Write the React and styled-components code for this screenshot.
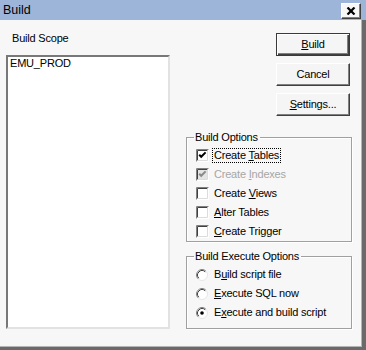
import React from 'react';
import styled, { createGlobalStyle } from 'styled-components';

const GlobalStyle = createGlobalStyle`
  html, body {
    margin: 0;
    padding: 0;
    background: #f7f7f7;
  }
  body {
    font-family: "Liberation Sans", Arial, sans-serif;
    font-size: 11px;
    letter-spacing: -0.2px;
    color: #000;
  }
`;

const Window = styled.div`
  width: 366px;
  height: 350px;
  display: flex;
  flex-direction: column;
  background: #f7f7f7;
  overflow: hidden;
`;

const TitleBar = styled.div`
  height: 20px;
  flex: none;
  display: flex;
  align-items: center;
  justify-content: space-between;
  padding: 0 5px 0 3px;
  background: #9db5d9;
`;

const Title = styled.span`
  font-size: 12.5px;
  letter-spacing: 0;
  line-height: 20px;
  color: #000;
`;

const CloseButton = styled.div`
  width: 20px;
  height: 16px;
  box-sizing: border-box;
  display: flex;
  align-items: center;
  justify-content: center;
  background: #f7f7f7;
  border: 1px solid;
  border-color: #fff #404040 #404040 #fff;
  box-shadow: inset -1px -1px #808080;
  margin-top: 1px;
`;

const Body = styled.div`
  flex: 1;
  display: flex;
  gap: 16px;
  padding: 0 10px 0 6px;
  border-right: 4px solid #6a6a6a;
  border-bottom: 3px solid #6a6a6a;
  box-shadow: inset -1px -1px #b4b4b4;
`;

const LeftColumn = styled.div`
  width: 164px;
  display: flex;
  flex-direction: column;
`;

const ScopeLabel = styled.div`
  margin: 12px 0 10px 6px;
  line-height: 13px;
`;

const ListBox = styled.div`
  height: 274px;
  box-sizing: border-box;
  background: #fff;
  border: 2px solid;
  border-color: #787878 #e2e2e2 #e2e2e2 #787878;
  padding: 0 2px;
`;

const ListItem = styled.div`
  line-height: 13px;
  white-space: nowrap;
`;

const RightColumn = styled.div`
  width: 166px;
  display: flex;
  flex-direction: column;
`;

const ButtonStack = styled.div`
  margin-top: 13px;
  padding-right: 2px;
  display: flex;
  flex-direction: column;
  align-items: flex-end;
  gap: 7px;
`;

const Button = styled.div`
  width: 74px;
  height: 23px;
  box-sizing: border-box;
  display: flex;
  align-items: center;
  justify-content: center;
  background: #f5f5f5;
  line-height: 13px;
  border: 1px solid;
  border-color: ${({ $default }) => ($default ? '#3a3a3a' : '#fff #404040 #404040 #fff')};
  box-shadow: ${({ $default }) =>
    $default
      ? 'inset 1px 1px #fff, inset -1px -1px #404040, inset -2px -2px #808080'
      : 'inset -1px -1px #808080'};
`;

const Key = styled.span`
  text-decoration: underline;
  text-underline-offset: 1px;
`;

const GroupBox = styled.fieldset`
  box-sizing: border-box;
  height: ${({ $h }) => $h}px;
  margin: ${({ $first }) => ($first ? '15px' : '8px')} 0 0 0;
  padding: 2px 8px 0 9px;
  border: 1px solid #a0a0a0;
  box-shadow: inset 1px 1px #fff, 1px 1px #fff;
  min-width: 0;
  overflow: hidden;
`;

const Legend = styled.legend`
  margin-left: -2px;
  padding: 0 2px 0 1px;
  line-height: 13px;
`;

const OptionRow = styled.div`
  height: 19px;
  display: flex;
  align-items: center;
  gap: 5px;
  color: ${({ $disabled }) => ($disabled ? '#a6a6a6' : '#000')};
`;

const OptionLabel = styled.span`
  line-height: 13px;
  padding: 0 1px;
  margin-left: -1px;
  outline: ${({ $focused }) => ($focused ? '1px dotted #000' : 'none')};
  white-space: nowrap;
`;

const CheckBox = ({ checked, disabled }) => (
  <svg width="13" height="13" viewBox="0 0 13 13" style={{ flex: 'none' }}>
    <rect x="0" y="0" width="13" height="13" fill="#fff" />
    <path d="M0.5 12.5 V0.5 H12.5" stroke="#808080" fill="none" />
    <path d="M1.5 11.5 V1.5 H11.5" stroke="#404040" fill="none" />
    <path d="M1.5 11.5 H11.5 V1.5" stroke="#dcdcdc" fill="none" />
    <rect x="2" y="2" width="9" height="9" fill={disabled ? '#e4e4e4' : '#fff'} />
    {checked && (
      <polyline
        points="3.2,5.8 5.2,7.8 9.6,3.4"
        stroke={disabled ? '#8a8a8a' : '#000'}
        strokeWidth="2"
        fill="none"
      />
    )}
  </svg>
);

const Radio = ({ checked }) => (
  <svg width="12" height="12" viewBox="0 0 12 12" style={{ flex: 'none', marginRight: 1 }}>
    <circle cx="6" cy="6" r="5.5" fill="#fff" />
    <path d="M2.11 9.89 A5.5 5.5 0 0 1 9.89 2.11" stroke="#808080" fill="none" />
    <path d="M9.89 2.11 A5.5 5.5 0 0 1 2.11 9.89" stroke="#e6e6e6" fill="none" />
    <path d="M2.82 9.18 A4.5 4.5 0 0 1 9.18 2.82" stroke="#404040" fill="none" />
    {checked && <circle cx="6" cy="6" r="1.8" fill="#000" />}
  </svg>
);

const buildOptions = [
  { pre: 'Create ', key: 'T', post: 'ables', checked: true, focused: true },
  { pre: 'Create ', key: 'I', post: 'ndexes', checked: true, disabled: true },
  { pre: 'Create ', key: 'V', post: 'iews' },
  { pre: '', key: 'A', post: 'lter Tables' },
  { pre: '', key: 'C', post: 'reate Trigger' },
];

const executeOptions = [
  { pre: 'B', key: 'u', post: 'ild script file' },
  { pre: '', key: 'E', post: 'xecute SQL now' },
  { pre: 'E', key: 'x', post: 'ecute and build script', checked: true },
];

const App = () => (
  <Window>
    <GlobalStyle />
    <TitleBar>
      <Title>Build</Title>
      <CloseButton>
        <svg width="10" height="8" viewBox="0 0 10 8">
          <path d="M1.5 0.5 L8.5 7.5 M8.5 0.5 L1.5 7.5" stroke="#000" strokeWidth="2.2" />
        </svg>
      </CloseButton>
    </TitleBar>
    <Body>
      <LeftColumn>
        <ScopeLabel>Build Scope</ScopeLabel>
        <ListBox>
          <ListItem>EMU_PROD</ListItem>
        </ListBox>
      </LeftColumn>
      <RightColumn>
        <ButtonStack>
          <Button $default>
            <span>
              <Key>B</Key>uild
            </span>
          </Button>
          <Button>Cancel</Button>
          <Button>
            <span>
              <Key>S</Key>ettings...
            </span>
          </Button>
        </ButtonStack>
        <GroupBox $first $h={111}>
          <Legend>Build Options</Legend>
          {buildOptions.map((o) => (
            <OptionRow key={o.pre + o.key + o.post} $disabled={o.disabled}>
              <CheckBox checked={o.checked} disabled={o.disabled} />
              <OptionLabel $focused={o.focused}>
                {o.pre}
                <Key>{o.key}</Key>
                {o.post}
              </OptionLabel>
            </OptionRow>
          ))}
        </GroupBox>
        <GroupBox $h={79}>
          <Legend>Build Execute Options</Legend>
          {executeOptions.map((o) => (
            <OptionRow key={o.pre + o.key + o.post}>
              <Radio checked={o.checked} />
              <OptionLabel>
                {o.pre}
                <Key>{o.key}</Key>
                {o.post}
              </OptionLabel>
            </OptionRow>
          ))}
        </GroupBox>
      </RightColumn>
    </Body>
  </Window>
);

export default App;
